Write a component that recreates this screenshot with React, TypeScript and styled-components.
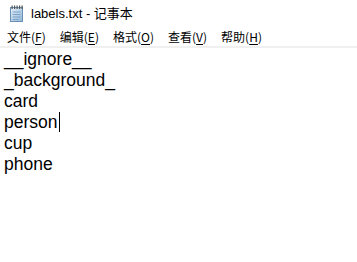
import React from "react";
import styled, { createGlobalStyle } from "styled-components";

const Global = createGlobalStyle`
  html, body { margin: 0; padding: 0; background: #fff; }
  body { width: 357px; height: 262px; overflow: hidden; }
`;

const Window = styled.div`
  width: 357px;
  height: 262px;
  display: flex;
  flex-direction: column;
  background: #fff;
  font-family: "Noto Sans CJK SC", "Liberation Sans", sans-serif;
`;

const TitleBar = styled.div`
  height: 27px;
  display: flex;
  align-items: center;
  gap: 6px;
  padding-left: 9px;
  box-sizing: border-box;
`;

const TitleText = styled.span`
  font-size: 13px;
  color: #000;
  font-family: "Liberation Sans", "Noto Sans CJK SC", sans-serif;
  line-height: 1;
  margin-top: -1px;
`;

const MenuBar = styled.div`
  height: 19px;
  display: flex;
  align-items: center;
  padding-left: 7px;
  gap: 14px;
  border-bottom: 2px solid #f0f0f0;
`;

const MenuItem = styled.span`
  font-size: 12px;
  color: #000;
  font-family: "Noto Sans CJK SC", sans-serif;
  line-height: 1;
  u { text-decoration: underline; text-underline-offset: 2px; }
`;

const Editor = styled.div`
  flex: 1;
  padding: 1px 0 0 4px;
  font-family: "Liberation Sans", "Noto Sans CJK SC", sans-serif;
  font-size: 17.5px;
  line-height: 21px;
  color: #000;
`;

const Line = styled.div`
  white-space: pre;
`;

const Caret = styled.span`
  display: inline-block;
  width: 1px;
  height: 20px;
  background: #000;
  vertical-align: -4px;
  margin-left: 1px;
`;

const NotepadIcon = () => (
  <svg width="16" height="18" viewBox="0 0 16 18">
    <defs>
      <linearGradient id="pg" x1="0" y1="0" x2="1" y2="1">
        <stop offset="0" stopColor="#e6f1fa" />
        <stop offset="1" stopColor="#8fb6d8" />
      </linearGradient>
    </defs>
    <rect x="1.5" y="2.5" width="12" height="14" fill="url(#pg)" stroke="#6a8fb5" />
    <line x1="3.5" y1="7" x2="11.5" y2="7" stroke="#7ea3c6" />
    <line x1="3.5" y1="9.5" x2="11.5" y2="9.5" stroke="#7ea3c6" />
    <line x1="3.5" y1="12" x2="11.5" y2="12" stroke="#7ea3c6" />
    <line x1="3.5" y1="14.5" x2="9.5" y2="14.5" stroke="#7ea3c6" />
    {[3, 5.5, 8, 10.5, 13].map((x) => (
      <rect key={x} x={x - 0.5} y="0.5" width="1.2" height="3.5" fill="#555" />
    ))}
  </svg>
);

const menus: [string, string][] = [
  ["文件", "F"],
  ["编辑", "E"],
  ["格式", "O"],
  ["查看", "V"],
  ["帮助", "H"],
];

const lines = ["__ignore__", "_background_", "card", "person", "cup", "phone"];

export default function App() {
  return (
    <>
      <Global />
      <Window>
        <TitleBar>
          <NotepadIcon />
          <TitleText>labels.txt - 记事本</TitleText>
        </TitleBar>
        <MenuBar>
          {menus.map(([name, key]) => (
            <MenuItem key={key}>
              {name}(<u>{key}</u>)
            </MenuItem>
          ))}
        </MenuBar>
        <Editor>
          {lines.map((l) => (
            <Line key={l}>
              {l}
              {l === "person" && <Caret />}
            </Line>
          ))}
        </Editor>
      </Window>
    </>
  );
}
